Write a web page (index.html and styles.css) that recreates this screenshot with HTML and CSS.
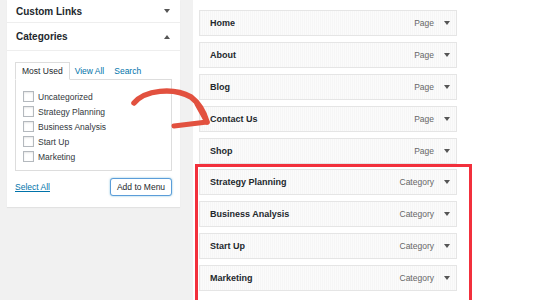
FILE: index.html
```html
<!DOCTYPE html>
<html lang="en">
<head>
    <meta charset="UTF-8">
    <title>Menus</title>
    <link rel="stylesheet" href="styles.css">
</head>
<body>
    <div class="page">
        <div class="side">
            <div class="box-head">
                <span>Custom Links</span>
                <i class="tri down"></i>
            </div>
            <div class="box-head">
                <span>Categories</span>
                <i class="tri up"></i>
            </div>
            <div class="box-body">
                <div class="tabs">
                    <span class="tab active">Most Used</span>
                    <a class="tab">View All</a>
                    <a class="tab">Search</a>
                </div>
                <ul class="checklist">
                    <li><span class="check"></span>Uncategorized</li>
                    <li><span class="check"></span>Strategy Planning</li>
                    <li><span class="check"></span>Business Analysis</li>
                    <li><span class="check"></span>Start Up</li>
                    <li><span class="check"></span>Marketing</li>
                </ul>
                <div class="actions">
                    <a class="select-all">Select All</a>
                    <button class="add-btn">Add to Menu</button>
                </div>
            </div>
        </div>
        <div class="menu">
            <div class="item"><b>Home</b><span class="type">Page</span><i class="tri down"></i></div>
            <div class="item"><b>About</b><span class="type">Page</span><i class="tri down"></i></div>
            <div class="item"><b>Blog</b><span class="type">Page</span><i class="tri down"></i></div>
            <div class="item"><b>Contact Us</b><span class="type">Page</span><i class="tri down"></i></div>
            <div class="item"><b>Shop</b><span class="type">Page</span><i class="tri down"></i></div>
            <div class="highlight">
                <div class="item"><b>Strategy Planning</b><span class="type">Category</span><i class="tri down"></i></div>
                <div class="item"><b>Business Analysis</b><span class="type">Category</span><i class="tri down"></i></div>
                <div class="item"><b>Start Up</b><span class="type">Category</span><i class="tri down"></i></div>
                <div class="item"><b>Marketing</b><span class="type">Category</span><i class="tri down"></i></div>
            </div>
        </div>
        <!-- hand drawn arrow -->
        <svg class="arrow" width="90" height="50" viewBox="0 0 90 50">
            <path d="M3 21 C 14 8, 42 5, 60 15 C 68 21, 73 30, 76 40" fill="none" stroke="#e2513f" stroke-width="5.5" stroke-linecap="round"/>
            <path d="M43 44 L 76 40 L 66 22" fill="none" stroke="#e2513f" stroke-width="5" stroke-linecap="round" stroke-linejoin="round"/>
        </svg>
    </div>
</body>
</html>
```

FILE: styles.css
```css
body,
ul{
    padding: 0;
    margin: 0;
}
ul{
    list-style: none;
}
body{
    background-color: #f1f1f1;
    font-family: "Liberation Sans", Arial, sans-serif;
    color: #23282d;
    overflow: hidden;
}
.page{
    display: flex;
    align-items: flex-start;
    height: 300px;
    position: relative;
    overflow: hidden;
}
.side{
    width: 173px;
    margin-left: 7px;
    background-color: #fff;
    box-shadow: 0 1px 1px rgba(0,0,0,.06);
}
.box-head{
    display: flex;
    justify-content: space-between;
    align-items: center;
    height: 22px;
    padding: 0 10px 0 9px;
    border-bottom: 1px solid #eee;
    font-size: 10px;
    font-weight: bold;
}
.box-head + .box-head{
    height: 27px;
}
.tri{
    width: 0;
    height: 0;
    border-left: 3px solid transparent;
    border-right: 3px solid transparent;
}
.tri.down{
    border-top: 4px solid #555;
}
.tri.up{
    border-bottom: 4px solid #555;
}
.box-body{
    padding: 11px 8px 11px 8px;
}
.tabs{
    display: flex;
    font-size: 8.5px;
    height: 17px;
    align-items: stretch;
}
.tab{
    display: flex;
    align-items: center;
    padding: 0 6px;
    color: #0073aa;
}
.tab + .tab{
    padding: 0 5px;
}
.tab.active{
    color: #23282d;
    border: 1px solid #ddd;
    border-bottom: 1px solid #fff;
    margin-bottom: -1px;
    background-color: #fff;
    position: relative;
}
.checklist{
    border: 1px solid #ddd;
    height: 81px;
    padding: 9px 7px 0 7px;
    font-size: 8.5px;
    color: #32373c;
}
.checklist li{
    display: flex;
    align-items: center;
    height: 15px;
}
.check{
    width: 9px;
    height: 9px;
    border: 1px solid #b4b9be;
    margin-right: 4px;
    box-shadow: inset 0 1px 2px rgba(0,0,0,.1);
}
.actions{
    display: flex;
    justify-content: space-between;
    align-items: center;
    margin-top: 7px;
}
.select-all{
    color: #0073aa;
    text-decoration: underline;
    font-size: 8.5px;
}
.add-btn{
    width: 62px;
    height: 18px;
    padding: 0;
    font-family: inherit;
    font-size: 8.5px;
    color: #23282d;
    background-color: #fff;
    border: 1px solid #5b9dd9;
    border-radius: 3px;
    box-shadow: 0 0 2px rgba(30,140,190,.6);
}
.menu{
    flex: 1;
    align-self: stretch;
    margin-left: 13px;
    background-color: #fff;
    padding: 10px 0 0 6px;
}
.item{
    display: flex;
    align-items: center;
    width: 258px;
    height: 26px;
    box-sizing: border-box;
    margin-bottom: 6px;
    padding: 0 6px 0 10px;
    border: 1px solid #e5e5e5;
    background-color: #f9f9f9;
    background-image: repeating-linear-gradient(90deg, #f6f6f6 0, #f6f6f6 1px, #fbfbfb 1px, #fbfbfb 2px);
    font-size: 9px;
}
.item b{
    flex: 1;
}
.type{
    color: #666;
    font-size: 8.5px;
    margin-right: 10px;
}
.highlight{
    width: 264px;
    margin-left: -4px;
    margin-top: -6px;
    padding: 2px 6px 20px 1px;
    border: 3px solid #f2303c;
}
.arrow{
    position: absolute;
    left: 131px;
    top: 82px;
    overflow: visible;
}
```
